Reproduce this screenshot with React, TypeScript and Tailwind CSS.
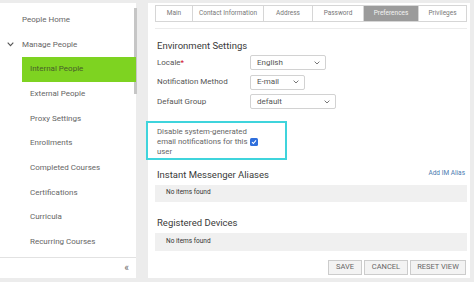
import React from "react";

const Chevron = ({ className = "" }: { className?: string }) => (
  <svg width="6" height="4" viewBox="0 0 6 4" className={className}>
    <path d="M0.6 0.6 L3 3 L5.4 0.6" fill="none" stroke="#777" strokeWidth="1" />
  </svg>
);

const Select = ({ w, value }: { w: string; value: string }) => (
  <div className={`${w} h-[15px] border border-[#d2d2d2] rounded-[2px] flex items-center justify-between pl-[6px] pr-[5px] text-[8px] text-[#555] bg-white`}>
    <span>{value}</span>
    <Chevron />
  </div>
);

const sideItems = [
  "External People",
  "Proxy Settings",
  "Enrollments",
  "Completed Courses",
  "Certifications",
  "Curricula",
  "Recurring Courses",
];

const tabs: { label: string; w: string; active?: boolean }[] = [
  { label: "Main", w: "w-[36px]" },
  { label: "Contact Information", w: "w-[71px]" },
  { label: "Address", w: "w-[49px]" },
  { label: "Password", w: "w-[51px]" },
  { label: "Preferences", w: "w-[55px]", active: true },
  { label: "Privileges", w: "w-[48px]" },
];

export default function App() {
  return (
    <div className="w-[474px] h-[282px] bg-[#ececec] flex pt-[3px] pb-[4px] pr-[4px] relative overflow-hidden font-['Roboto','Liberation_Sans',sans-serif]">
      {/* Sidebar */}
      <div className="w-[138px] bg-white flex flex-col relative">
        <div className="absolute left-[134px] top-[5px] w-[3px] h-[86px] bg-[#c6c6c6]" />
        <div className="pt-[4.5px] relative">
          <div className="h-[24.7px] flex items-center pl-[22px] text-[8px] text-[#666]">People Home</div>
          <div className="h-[24.7px] flex items-center text-[8px] text-[#666] relative">
            <svg width="7" height="5" viewBox="0 0 7 5" className="absolute left-[7px] top-[10px]">
              <path d="M0.7 0.7 L3.5 3.7 L6.3 0.7" fill="none" stroke="#555" strokeWidth="1.1" />
            </svg>
            <span className="pl-[22px]">Manage People</span>
          </div>
          <div className="ml-[22px] h-[24.7px] bg-[#7ed321] flex items-center pl-[8px] text-[8px] text-[#48602a] relative">Internal People</div>
          {sideItems.map((s) => (
            <div key={s} className="h-[24.7px] flex items-center pl-[30px] text-[8px] text-[#666]">
              {s}
            </div>
          ))}
        </div>
        <div className="mt-auto border-t border-[#e2e2e2] h-[21px] flex items-center justify-end pr-[7px] text-[10px] text-[#666] leading-none">
          «
        </div>
      </div>

      {/* Main */}
      <div className="flex-1 ml-[12px] bg-white pl-[7px] pr-[3px] flex flex-col">
        <div className="pt-[2px] pb-[6px] border-b border-[#ececec]">
          <div className="flex h-[17px] border border-[#d6d6d6]">
            {tabs.map((t, i) => (
              <div
                key={t.label}
                className={`${t.w} h-full flex items-center justify-center text-[6.5px] ${i > 0 ? "border-l border-[#d6d6d6]" : ""} ${t.active ? "bg-[#9b9b9b] text-[#f4f4f4]" : "text-[#777] bg-white"}`}
              >
                {t.label}
              </div>
            ))}
          </div>
        </div>

        <div className="mt-[11px] h-[12px] leading-[12px] pl-[2px] text-[9.5px] text-[#3a3a3a]">Environment Settings</div>
        <div className="mt-[1px] pl-[2px]">
          <div className="h-[19.5px] flex items-center">
            <div className="w-[93px] text-[8px] text-[#555]">
              Locale<span className="text-[#d0021b]">*</span>
            </div>
            <Select w="w-[76px]" value="English" />
          </div>
          <div className="h-[19.5px] flex items-center">
            <div className="w-[93px] text-[8px] text-[#555]">Notification Method</div>
            <Select w="w-[55px]" value="E-mail" />
          </div>
          <div className="h-[19.5px] flex items-center">
            <div className="w-[93px] text-[8px] text-[#555]">Default Group</div>
            <Select w="w-[86px]" value="default" />
          </div>
        </div>

        <div className="mt-[15px] pl-[2px] flex items-center">
          <div className="w-[93px] text-[7.8px] leading-[10px] text-[#666]">
            Disable system-generated
            <br />
            email notifications for this
            <br />
            user
          </div>
          <div className="w-[8px] h-[8px] rounded-[1.5px] bg-[#2f6fdc] flex items-center justify-center">
            <svg width="6" height="6" viewBox="0 0 6 6">
              <path d="M1 3.1 L2.4 4.5 L5 1.4" fill="none" stroke="white" strokeWidth="1.1" />
            </svg>
          </div>
        </div>

        <div className="mt-[13px] h-[12px] flex items-center justify-between pl-[2px] pr-[2px]">
          <span className="text-[9.5px] text-[#3a3a3a]">Instant Messenger Aliases</span>
          <span className="text-[6.5px] text-[#4a7ab0] -mt-[4px]">Add IM Alias</span>
        </div>
        <div className="mt-[3px] h-[17px] bg-[#f0f0f0] flex items-center pl-[11px] text-[6.5px] text-[#333]">No items found</div>

        <div className="mt-[16px] h-[12px] flex items-center pl-[2px] text-[9.5px] text-[#3a3a3a]">Registered Devices</div>
        <div className="mt-[3px] h-[18px] bg-[#f0f0f0] flex items-center pl-[11px] text-[6.5px] text-[#333]">No items found</div>

        <div className="mt-[9px] flex justify-end gap-[2px] pr-[1px]">
          <div className="w-[34px] h-[15px] border border-[#cccccc] bg-[#f3f3f3] flex items-center justify-center text-[7.5px] text-[#666]">SAVE</div>
          <div className="w-[44px] h-[15px] border border-[#cccccc] bg-[#f3f3f3] flex items-center justify-center text-[7.5px] text-[#666]">CANCEL</div>
          <div className="w-[56px] h-[15px] border border-[#cccccc] bg-[#f3f3f3] flex items-center justify-center text-[7.5px] text-[#666]">RESET VIEW</div>
        </div>
      </div>

      {/* Annotation highlight */}
      <div className="absolute left-[146px] top-[121px] w-[141px] h-[39px] border-2 border-[#3fd4dc] pointer-events-none" />
    </div>
  );
}
